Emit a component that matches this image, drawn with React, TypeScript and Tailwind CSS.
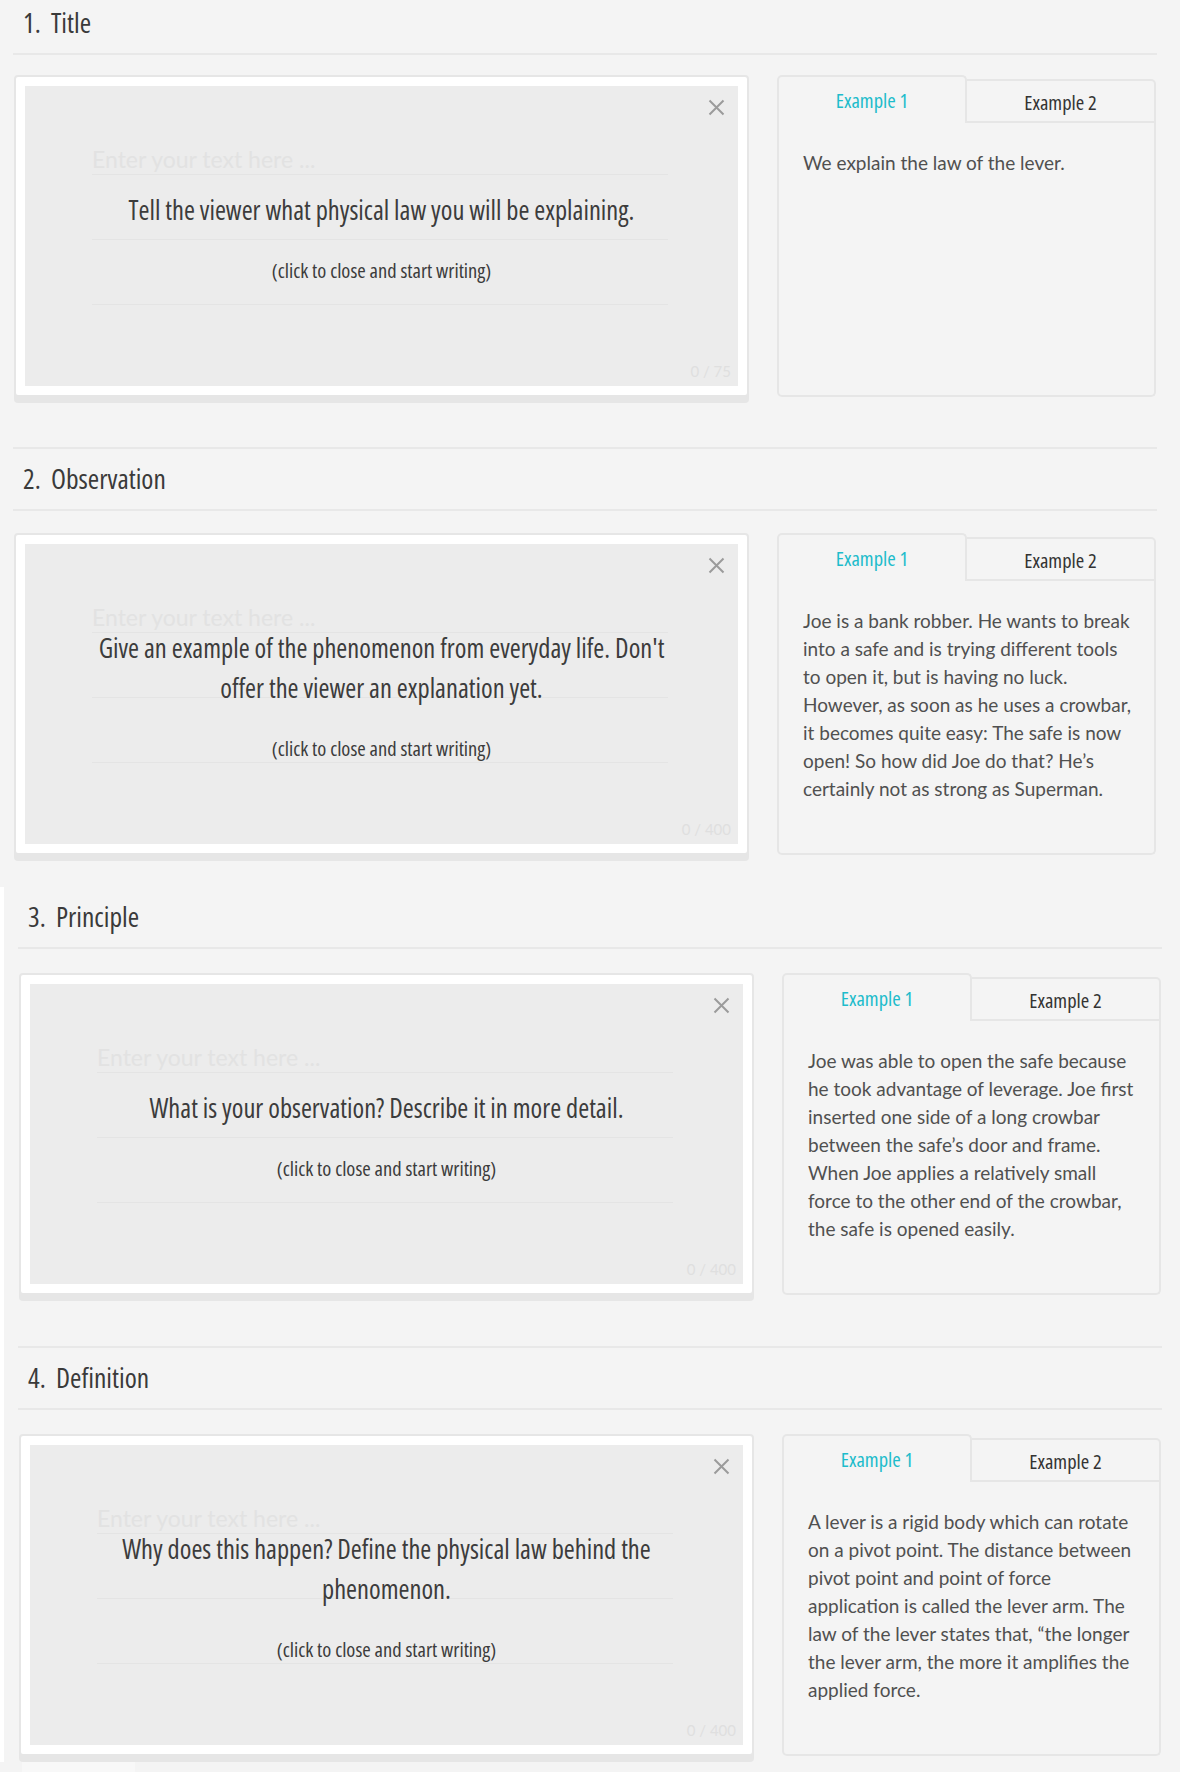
import React from 'react';

// condensed headline face: Open Sans on its narrow width axis
const narrow = "font-['Open_Sans',sans-serif] [font-stretch:75%]";
const body = "font-['Lato','Open_Sans',sans-serif]";

interface SectionData {
  num: number;
  title: string;
  prompt: string[];
  limit: number;
  example: string[];
}

const sections: SectionData[] = [
  {
    num: 1,
    title: 'Title',
    prompt: ['Tell the viewer what physical law you will be explaining.'],
    limit: 75,
    example: ['We explain the law of the lever.'],
  },
  {
    num: 2,
    title: 'Observation',
    prompt: ["Give an example of the phenomenon from everyday life. Don't", 'offer the viewer an explanation yet.'],
    limit: 400,
    example: [
      'Joe is a bank robber. He wants to break',
      'into a safe and is trying different tools',
      'to open it, but is having no luck.',
      'However, as soon as he uses a crowbar,',
      'it becomes quite easy: The safe is now',
      'open! So how did Joe do that? He’s',
      'certainly not as strong as Superman.',
    ],
  },
  {
    num: 3,
    title: 'Principle',
    prompt: ['What is your observation? Describe it in more detail.'],
    limit: 400,
    example: [
      'Joe was able to open the safe because',
      'he took advantage of leverage. Joe first',
      'inserted one side of a long crowbar',
      'between the safe’s door and frame.',
      'When Joe applies a relatively small',
      'force to the other end of the crowbar,',
      'the safe is opened easily.',
    ],
  },
  {
    num: 4,
    title: 'Definition',
    prompt: ['Why does this happen? Define the physical law behind the', 'phenomenon.'],
    limit: 400,
    example: [
      'A lever is a rigid body which can rotate',
      'on a pivot point. The distance between',
      'pivot point and point of force',
      'application is called the lever arm. The',
      'law of the lever states that, “the longer',
      'the lever arm, the more it amplifies the',
      'applied force.',
    ],
  },
];

const CloseIcon = () => (
  <svg width="17" height="17" viewBox="0 0 17 17" fill="none">
    <path d="M1.5 1.5 L15.5 15.5 M15.5 1.5 L1.5 15.5" stroke="#9b9b9b" strokeWidth="2" />
  </svg>
);

const WritingCard = ({ prompt, limit }: { prompt: string[]; limit: number }) => (
  <div className="bg-white border-2 border-[#e6e6e6] rounded-[4px] p-[9px] shadow-[0_6px_0_#e6e6e6]">
    <div className="relative h-[300px] bg-[#ececec]">
      <div className="pt-[24px] pl-[67px] pr-[70px]">
        <div className={`h-[65px] flex items-end pb-[1px] border-b border-[#e4e4e4] text-[23px] leading-[28px] text-[#e2e2e2] ${body}`}>
          Enter your text here ...
        </div>
        <div className="h-[65px] border-b border-[#e4e4e4]" />
        <div className="h-[65px] border-b border-[#e4e4e4]" />
      </div>

      <div className={`absolute inset-0 flex flex-col items-center justify-center text-center text-[#3c3c3c] ${narrow}`}>
        <div className="text-[26.5px] leading-[40px]">
          {prompt.map((line) => (
            <div key={line}>{line}</div>
          ))}
        </div>
        <div className="mt-[28px] text-[20.5px] leading-[24px]">(click to close and start writing)</div>
      </div>

      <button className="absolute top-[13px] right-[13px]">
        <CloseIcon />
      </button>
      <span className={`absolute right-[7px] bottom-[5px] text-[15px] leading-[20px] text-[#dfdfdf] ${body}`}>
        0 / {limit}
      </span>
    </div>
  </div>
);

const ExampleTabs = ({ lines }: { lines: string[] }) => (
  <div className="flex flex-col">
    <div className={`flex items-end ${narrow}`}>
      <div className="w-[190px] h-[48px] border-2 border-b-0 border-[#e6e6e6] rounded-t-[5px] flex items-center justify-center text-[20.5px] text-[#1dbccb]">
        Example 1
      </div>
      <div className="flex-1 h-[44px] border-2 border-l-0 border-[#e6e6e6] rounded-tr-[5px] flex items-center justify-center pt-[2px] text-[20.5px] text-[#333]">
        Example 2
      </div>
    </div>
    <div className={`flex-1 border-2 border-t-0 border-[#e6e6e6] rounded-b-[5px] pt-[26px] px-[24px] text-[19px] leading-[28px] text-[#505050] ${body}`}>
      {lines.map((line) => (
        <div key={line} className="whitespace-nowrap">
          {line}
        </div>
      ))}
    </div>
  </div>
);

const Section = ({ data, topRule, gap, last }: { data: SectionData; topRule: boolean; gap: string; last: string }) => (
  <section className={`${topRule ? 'border-t-2 border-[#e8e8e8]' : ''} ${last}`}>
    <div className="h-[62px] border-b-2 border-[#e8e8e8] flex items-center pl-[10px]">
      <h2 className={`text-[27.5px] text-[#3a3a3a] ${narrow}`}>
        {data.num}.&nbsp;&nbsp;{data.title}
      </h2>
    </div>
    <div className={`${gap} grid grid-cols-[735px_379px] gap-x-[28px] pl-px`}>
      <WritingCard prompt={data.prompt} limit={data.limit} />
      <ExampleTabs lines={data.example} />
    </div>
  </section>
);

export default function App() {
  return (
    <div className="min-h-screen bg-[#f4f4f4] overflow-hidden">
      <div className="ml-[13px] w-[1144px] -mt-[9px]">
        <Section data={sections[0]} topRule gap="mt-[20px]" last="pb-[50px]" />
        <Section data={sections[1]} topRule gap="mt-[22px]" last="pb-[32px]" />
      </div>
      <div className="border-l-4 border-white pb-[6px]">
        <div className="ml-[14px] w-[1144px]">
          <Section data={sections[2]} topRule={false} gap="mt-[24px]" last="pb-[51px]" />
          <Section data={sections[3]} topRule gap="mt-[24px]" last="" />
        </div>
      </div>
      <div className="ml-[22px] w-[113px] h-[12px] bg-[#f8f8f8]" />
    </div>
  );
}
